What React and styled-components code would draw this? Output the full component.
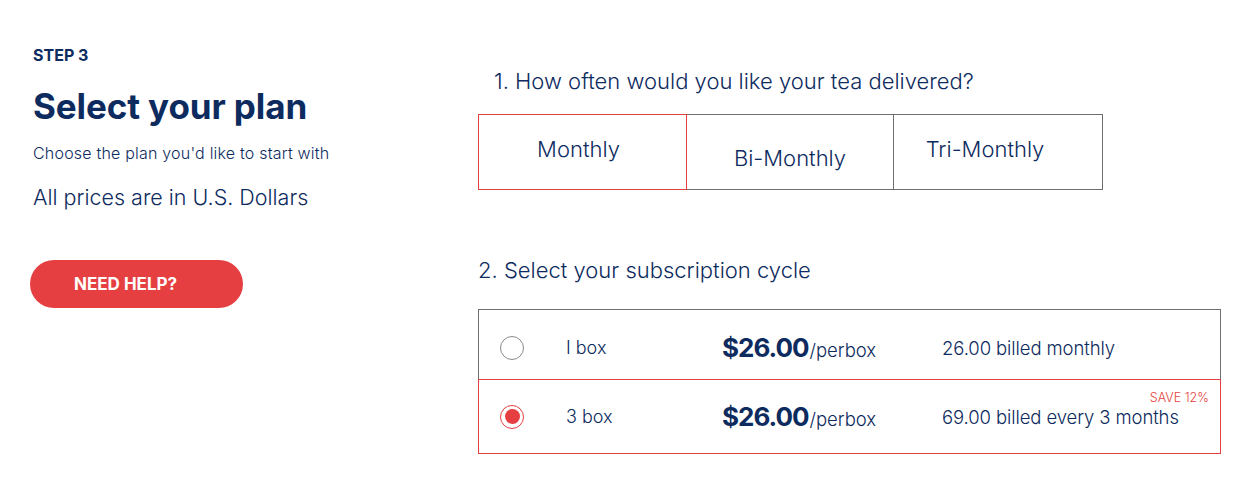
import React from "react";
import styled, { createGlobalStyle, css } from "styled-components";

const NAVY = "#0d2b5e";
const RED = "#e63f41";
const GRAY = "#6f6f6f";

const Global = createGlobalStyle`
  html, body { margin: 0; padding: 0; background: #fff; }
  body { font-family: "Inter", "Noto Sans", sans-serif; color: ${NAVY}; }
  * { box-sizing: border-box; }
`;

const Page = styled.div`
  display: flex;
  width: 1240px;
  height: 482px;
  padding: 45px 0 0 33px;
`;

const Left = styled.div`
  width: 445px;
  display: flex;
  flex-direction: column;
  align-items: flex-start;
`;

const Step = styled.div`
  font-size: 16px;
  font-weight: 700;
  line-height: 20px;
`;

const Title = styled.h1`
  margin: 20px 0 0;
  font-size: 35px;
  font-weight: 700;
  line-height: 42px;
  letter-spacing: -0.1px;
`;

const Sub = styled.p`
  margin: 17px 0 0;
  font-size: 16px;
  font-weight: 300;
  line-height: 18px;
  letter-spacing: 0.2px;
`;

const Note = styled.p`
  margin: 22px 0 0;
  font-size: 21.5px;
  font-weight: 300;
  line-height: 26px;
`;

const HelpButton = styled.button`
  margin: 50px 0 0 -3px;
  width: 213px;
  height: 48px;
  border: none;
  border-radius: 24px;
  background: ${RED};
  color: #fff;
  font-family: inherit;
  font-size: 17px;
  font-weight: 700;
  text-align: left;
  padding: 0 0 0 44px;
`;

const Right = styled.div`
  width: 742px;
  display: flex;
  flex-direction: column;
`;

const Question = styled.h2`
  margin: ${(p) => p.$mt}px 0 0 ${(p) => p.$indent}px;
  font-size: 22px;
  font-weight: 300;
  line-height: 28px;
`;

const Tabs = styled.div`
  margin-top: 19px;
  display: flex;
  width: 625px;
  height: 76px;
`;

const Tab = styled.div`
  position: relative;
  width: ${(p) => p.$w}px;
  margin-left: -1px;
  border: 1px solid ${(p) => (p.$active ? RED : GRAY)};
  z-index: ${(p) => (p.$active ? 1 : 0)};
  display: flex;
  justify-content: center;
  padding-top: ${(p) => p.$top}px;
  padding-right: ${(p) => p.$shiftLeft * 2}px;
  font-size: 22px;
  font-weight: 300;
  line-height: 26px;
  &:first-child {
    margin-left: 0;
  }
`;

const Cycle = styled.div`
  margin-top: 25px;
  display: flex;
  flex-direction: column;
  width: 743px;
`;

const Row = styled.div`
  position: relative;
  height: ${(p) => p.$h}px;
  margin-top: -1px;
  border: 1px solid ${(p) => (p.$active ? RED : GRAY)};
  z-index: ${(p) => (p.$active ? 1 : 0)};
  display: grid;
  grid-template-columns: 66px 156px 220px 1fr;
  align-items: center;
  padding: ${(p) => p.$pt}px 0 0 21px;
  &:first-child {
    margin-top: 0;
  }
`;

const Radio = styled.span`
  width: 24px;
  height: 24px;
  border-radius: 50%;
  border: 1px solid #8a8a8a;
  display: flex;
  align-items: center;
  justify-content: center;
  ${(p) =>
    p.$checked &&
    css`
      border-color: ${RED};
      &::after {
        content: "";
        width: 15px;
        height: 15px;
        border-radius: 50%;
        background: ${RED};
      }
    `}
`;

const BoxLabel = styled.span`
  font-size: 18px;
  font-weight: 300;
`;

const Price = styled.span`
  display: flex;
  align-items: baseline;
  white-space: nowrap;
`;

const Amount = styled.span`
  font-size: 26px;
  font-weight: 700;
  letter-spacing: -1px;
`;

const Per = styled.span`
  margin-left: 1px;
  font-size: 18.5px;
  font-weight: 300;
`;

const Billing = styled.span`
  font-size: 18.5px;
  font-weight: 300;
  letter-spacing: -0.1px;
  white-space: nowrap;
`;

const Save = styled.span`
  position: absolute;
  top: 10px;
  right: 11px;
  font-size: 12.5px;
  font-weight: 300;
  color: ${RED};
`;

const tabs = [
  { label: "Monthly", w: 209, top: 21, shift: 4, active: true },
  { label: "Bi-Monthly", w: 208, top: 30, shift: 0, active: false },
  { label: "Tri-Monthly", w: 210, top: 21, shift: 13, active: false },
];

const cycles = [
  { label: "I box", bill: "26.00 billed monthly", h: 71, pt: 6, active: false },
  { label: "3 box", bill: "69.00 billed every 3 months", h: 75, pt: 0, active: true, save: "SAVE 12%" },
];

export default function App() {
  return (
    <>
      <Global />
      <Page>
        <Left>
          <Step>STEP 3</Step>
          <Title>Select your plan</Title>
          <Sub>Choose the plan you'd like to start with</Sub>
          <Note>All prices are in U.S. Dollars</Note>
          <HelpButton>NEED HELP?</HelpButton>
        </Left>
        <Right>
          <Question $mt={22} $indent={16}>1. How often would you like your tea delivered?</Question>
          <Tabs>
            {tabs.map((t) => (
              <Tab key={t.label} $w={t.w} $active={t.active} $top={t.top} $shiftLeft={t.shift}>
                {t.label}
              </Tab>
            ))}
          </Tabs>
          <Question $mt={66} $indent={0}>2. Select your subscription cycle</Question>
          <Cycle>
            {cycles.map((c) => (
              <Row key={c.label} $h={c.h} $pt={c.pt} $active={c.active}>
                <Radio $checked={c.active} />
                <BoxLabel>{c.label}</BoxLabel>
                <Price>
                  <Amount>$26.00</Amount>
                  <Per>/perbox</Per>
                </Price>
                <Billing>{c.bill}</Billing>
                {c.save && <Save>{c.save}</Save>}
              </Row>
            ))}
          </Cycle>
        </Right>
      </Page>
    </>
  );
}
